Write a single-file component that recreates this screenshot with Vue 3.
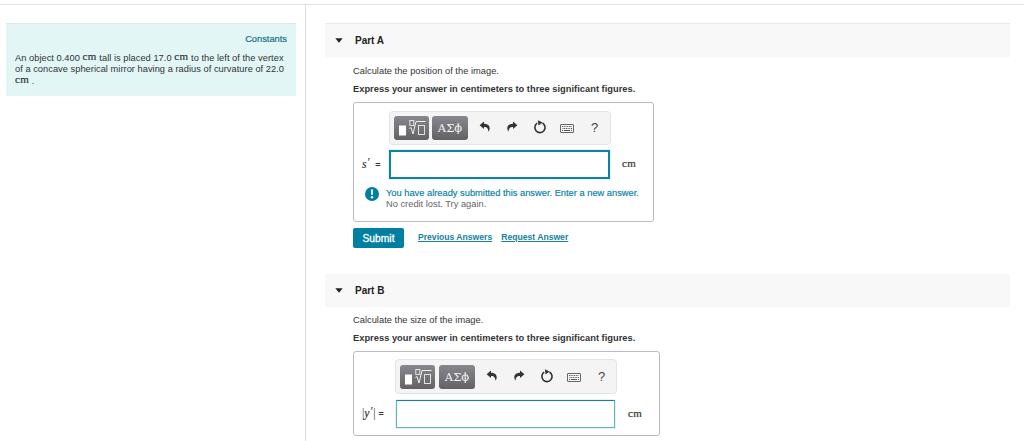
<template>
  <div class="page">
    <aside class="sidebar">
      <div class="intro">
        <a class="constants">Constants</a>
        <p class="problem">
          <span class="line">An object 0.400 <span class="unit">cm</span> tall is placed 17.0 <span class="unit">cm</span> to the left of the vertex</span>
          <span class="line">of a concave spherical mirror having a radius of curvature of 22.0</span>
          <span class="line"><span class="unit">cm</span> .</span>
        </p>
      </div>
    </aside>

    <main class="content">
      <section v-for="part in parts" :key="part.id" class="part" :class="part.id">
        <header class="part-header">
          <svg class="caret" width="8" height="5" viewBox="0 0 8 5"><path d="M.3.2h7.4L4 4.7z" fill="#222" /></svg>
          <h2>{{ part.title }}</h2>
        </header>
        <div class="part-body">
          <p class="question">{{ part.question }}</p>
          <p class="instruction">Express your answer in centimeters to three significant figures.</p>

          <div class="answer-box">
            <div class="toolbar">
              <button class="tool dark">
                <svg width="35" height="24" viewBox="0 0 35 24" fill="none" stroke="#eee">
                  <rect x="5" y="9.5" width="7" height="10" fill="#fff" stroke="none" />
                  <rect x="15.8" y="4.5" width="4" height="5" stroke-width=".9" />
                  <path d="M15.5 12.5l1.5-1 2 6.5 3-12.5h9.5" stroke-width="1" />
                  <rect x="24.5" y="9.5" width="6" height="9" stroke-width=".9" />
                </svg>
              </button>
              <button class="tool dark greek"><span>ΑΣϕ</span></button>
              <svg class="icon" width="12" height="12" viewBox="0 0 12 12">
                <path d="M5 .4L.6 4.2 5 8V6c2.7-.1 4.2 1 4.5 4.8C12.2 6.8 10.3 2.8 5 2.7z" fill="#333" />
              </svg>
              <svg class="icon" width="12" height="12" viewBox="0 0 12 12">
                <path d="M7 .4l4.4 3.8L7 8V6C4.3 5.9 2.8 7 2.5 10.8-.2 6.8 1.7 2.8 7 2.7z" fill="#333" />
              </svg>
              <svg class="icon" width="14" height="14" viewBox="0 0 14 14">
                <path d="M9.4 3A5.1 5.1 0 1 1 4.2 3.2" fill="none" stroke="#333" stroke-width="1.6" />
                <path d="M4.9.3l4.6 2.2-4 3z" fill="#333" />
              </svg>
              <svg class="icon keyboard" width="14" height="9" viewBox="0 0 14 9">
                <rect x=".5" y=".5" width="13" height="8" rx=".5" fill="#f7f7f7" stroke="#666" />
                <path d="M2 2.5h10M2.5 4.5h9.5" stroke="#555" stroke-dasharray="1 .7" />
                <path d="M2 6.5h1M4 6.5h6M11 6.5h1" stroke="#555" />
              </svg>
              <span class="help">?</span>
            </div>

            <div class="entry">
              <label class="symbol">
                <template v-if="part.id === 'a'"><i>s</i><sup>′</sup><span class="eq">=</span></template>
                <template v-else><span class="bar">|</span><i>y</i><sup>′</sup><span class="bar">|</span><span class="eq">=</span></template>
              </label>
              <input type="text" class="field" />
              <span class="unit">cm</span>
            </div>

            <div v-if="part.feedback" class="feedback">
              <svg width="14" height="14" viewBox="0 0 14 14">
                <circle cx="7" cy="7" r="7" fill="#007fa3" />
                <path d="M5.9 2.5h2.2l-.4 5.4H6.3z" fill="#fff" />
                <circle cx="7" cy="10.2" r="1.2" fill="#fff" />
              </svg>
              <div>
                <p class="warn">{{ part.feedback.title }}</p>
                <p class="note">{{ part.feedback.note }}</p>
              </div>
            </div>
          </div>

          <div v-if="part.feedback" class="actions">
            <button class="submit">Submit</button>
            <a class="link previous">Previous Answers</a>
            <a class="link request">Request Answer</a>
          </div>
        </div>
      </section>
    </main>
  </div>
</template>

<script setup>
const parts = [
  {
    id: 'a',
    title: 'Part A',
    question: 'Calculate the position of the image.',
    feedback: {
      title: 'You have already submitted this answer. Enter a new answer.',
      note: 'No credit lost. Try again.'
    }
  },
  {
    id: 'b',
    title: 'Part B',
    question: 'Calculate the size of the image.',
    feedback: null
  }
]
</script>

<style>
body {
  margin: 0;
  background: #fff;
}
</style>

<style scoped>
* {
  box-sizing: border-box;
}
.page {
  display: flex;
  width: 1024px;
  height: 441px;
  padding-top: 4px;
  overflow: hidden;
  color: #333;
  font: 9.3px/12px "Liberation Sans", Arial, sans-serif;
  background: linear-gradient(#e2e2e2, #e2e2e2) 0 4px / 100% 1px no-repeat;
}
p,
h2 {
  margin: 0;
}
button {
  border: 0;
  padding: 0;
}
.sidebar {
  width: 306px;
  flex: none;
  margin-top: 1px;
  padding: 18px 9px 0 6px;
  border-right: 1px solid #d5dce5;
}
.intro {
  height: 73px;
  padding: 9px 9px 0;
  border-top: 1px solid #dcebea;
  background: #e2f6f6;
}
.constants {
  display: block;
  text-align: right;
  color: #1a708c;
  -webkit-text-stroke: 0.2px;
}
.problem {
  margin-top: 8px;
  line-height: 11.3px;
  letter-spacing: 0.02px;
}
.line {
  display: block;
  height: 11.3px;
  white-space: nowrap;
}
.unit {
  font: 11px/11px "Liberation Serif", serif;
  letter-spacing: 0.4px;
  -webkit-text-stroke: 0.2px;
}
.line .unit {
  position: relative;
  top: -1px;
  line-height: 0;
}
.content {
  width: 685px;
  margin-left: 19px;
  padding-top: 19px;
}
.part.a {
  height: 251px;
}
.part-header {
  display: flex;
  align-items: center;
  height: 34px;
  padding-left: 10px;
  background: #f8f8f8;
}
.a .part-header {
  border-top: 1px solid #eaeaea;
}
.b .part-header {
  height: 33px;
}
.part-header h2 {
  margin-left: 12px;
  font-size: 10px;
  line-height: 12px;
  color: #222;
}
.part-body {
  display: flex;
  flex-direction: column;
  align-items: flex-start;
  padding: 8px 0 0 28px;
}
.b .part-body {
  padding-top: 7px;
}
.question,
.instruction {
  white-space: nowrap;
  letter-spacing: 0.02px;
}
.instruction {
  margin-top: 6px;
  font-weight: bold;
}
.answer-box {
  width: 301px;
  height: 120px;
  margin-top: 7px;
  padding: 8px 0 0 8px;
  border: 1px solid #bcbcbc;
  border-radius: 3px;
}
.b .answer-box {
  width: 307px;
  height: 85px;
  padding-top: 7px;
}
.toolbar {
  display: flex;
  align-items: center;
  width: 222px;
  height: 34px;
  margin-left: 27px;
  padding-left: 4px;
  border: 1px solid #e3e3e3;
  border-radius: 4px;
  background: #f4f4f4;
}
.b .toolbar {
  margin-left: 33px;
  height: 35px;
}
.tool.dark {
  width: 35px;
  height: 24px;
  margin-right: 3px;
  border-radius: 3px;
  background: linear-gradient(#89878e, #626264);
}
.b .tool.dark:first-child {
  margin-right: 4px;
}
.tool.dark svg {
  display: block;
}
.tool.dark.greek {
  width: 36px;
  margin-right: 11px;
  color: #f4f4f4;
  font: 11.5px/22px "DejaVu Serif", serif;
}
.icon {
  flex: none;
  position: relative;
  top: -1px;
  margin-right: 15px;
}
.icon.keyboard {
  top: 0;
  margin: 1px 17px 0 -2px;
}
.help {
  position: relative;
  top: 0;
  font-size: 13px;
  color: #444;
}
.entry {
  display: flex;
  align-items: center;
  margin-top: 5px;
}
.b .entry {
  margin-top: 6px;
}
.symbol {
  width: 27px;
  flex: none;
  margin-top: -2px;
  font: 11.5px/14px "Liberation Serif", serif;
  white-space: nowrap;
}
.symbol i {
  -webkit-text-stroke: 0.2px;
}
.b .symbol {
  width: 34px;
}
.symbol sup {
  margin-left: 1px;
  font-size: 13px;
  line-height: 0;
  vertical-align: 2px;
}
.eq {
  margin-left: 5px;
  font: bold 9px "Liberation Sans", Arial, sans-serif;
}
.b .eq {
  margin-left: 3px;
}
.field {
  width: 221px;
  height: 29px;
  border: 2px solid #0d81a4;
  outline: 0;
  box-shadow: 0 0 1px #5db5cd;
}
.b .field {
  width: 219px;
  height: 28px;
  border: 1px solid #5fb2c9;
  border-top-color: #0d81a4;
}
.entry .unit {
  margin: -2px 0 0 12px;
}
.b .entry .unit {
  margin-left: 13px;
}
.feedback {
  display: flex;
  margin-top: 8px;
  padding-left: 3px;
}
.feedback svg {
  flex: none;
  margin: 0 7px 0 0;
}
.feedback p {
  line-height: 11px;
  white-space: nowrap;
}
.feedback div {
  padding-top: 1px;
}
.warn {
  color: #007fa3;
  -webkit-text-stroke: 0.15px;
}
.note {
  color: #666;
}
.actions {
  display: flex;
  align-items: center;
  height: 20px;
  margin-top: 6px;
}
.submit {
  width: 51px;
  height: 20px;
  border-radius: 2px;
  color: #fff;
  background: #007fa3;
  font: 10.3px "Liberation Sans", Arial, sans-serif;
  -webkit-text-stroke: 0.3px;
}
.link {
  margin: -2px 0 0 14px;
  color: #1580a0;
  font-size: 8.6px;
  font-weight: bold;
  text-decoration: underline;
  text-underline-offset: 1px;
}
.request {
  margin-left: 9px;
}
</style>
